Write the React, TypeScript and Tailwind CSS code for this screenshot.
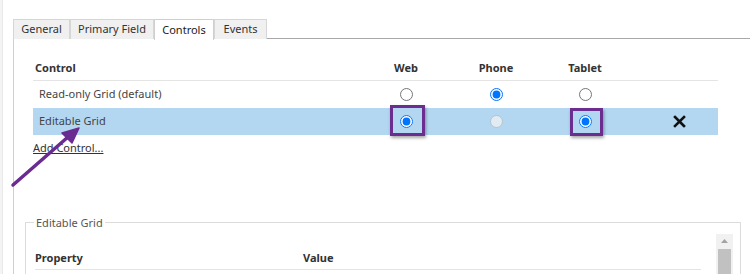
import React from "react";

function Radio({ checked, disabled }: { checked?: boolean; disabled?: boolean }) {
  return (
    <input
      type="radio"
      readOnly
      checked={!!checked}
      disabled={disabled}
      className="m-0 w-[13px] h-[13px]"
    />
  );
}

export default function App() {
  const font = { fontFamily: '"Noto Sans", "Open Sans", sans-serif' };
  return (
    <div
      className="relative w-[750px] h-[274px] overflow-hidden bg-white text-[11px] text-[#333]"
      style={font}
    >
      <div className="flex h-full">
        <div className="w-[3px] h-full bg-[#f4f4f4] border-r border-[#e8e8e8]" />
        <div className="flex-1 flex flex-col pl-[10px]">
          {/* Tabs */}
          <div className="flex pt-[19px] h-[39px] border-b border-[#a8a8a8]">
            {[
              { t: "General", w: "w-[57px]" },
              { t: "Primary Field", w: "w-[84px]" },
              { t: "Controls", w: "w-[60px]", active: true },
              { t: "Events", w: "w-[53px]" },
            ].map((tab) => (
              <div
                key={tab.t}
                className={
                  "h-[20px] flex items-center justify-center border-t border-l border-r " +
                  tab.w +
                  " " +
                  (tab.active
                    ? "bg-white border-[#cfcfcf] h-[21px] -mb-px relative z-10 text-[#222]"
                    : "bg-[#f0f0f0] border-[#d6d6d6] text-[#333]")
                }
              >
                {tab.t}
              </div>
            ))}
          </div>
          {/* Panel */}
          <div className="flex-1 border-l border-[#cfcfcf] flex flex-col">
            <div className="pl-[19px] pt-[17px]">
              <div className="w-[685px]">
                <div className="grid grid-cols-[330px_86px_94px_84px_91px] h-[25px] border-b border-[#e4e4e4] items-center font-bold text-[#333]">
                  <div className="pl-[2px]">Control</div>
                  <div className="text-center">Web</div>
                  <div className="text-center">Phone</div>
                  <div className="text-center">Tablet</div>
                  <div />
                </div>
                <div className="grid grid-cols-[330px_86px_94px_84px_91px] h-[27px] items-center">
                  <div className="pl-[6px] text-[#444]">Read-only Grid (default)</div>
                  <div className="flex justify-center"><Radio /></div>
                  <div className="flex justify-center"><Radio checked /></div>
                  <div className="flex justify-center"><Radio /></div>
                  <div />
                </div>
                <div className="grid grid-cols-[330px_86px_94px_84px_91px] h-[27px] items-center bg-[#b3d7f1]">
                  <div className="pl-[6px] text-[#444]">Editable Grid</div>
                  <div className="flex justify-center"><Radio checked /></div>
                  <div className="flex justify-center"><Radio disabled /></div>
                  <div className="flex justify-center"><Radio checked /></div>
                  <div className="pl-[46px] flex items-center">
                    <svg width="13" height="13" viewBox="0 0 13 13">
                      <path d="M2 2 L11 11 M11 2 L2 11" stroke="#111" strokeWidth="2.6" strokeLinecap="square" />
                    </svg>
                  </div>
                </div>
                <div className="pt-[5px]">
                  <span className="underline text-[#333]">Add Control...</span>
                </div>
              </div>
            </div>
            {/* Fieldset */}
            <div className="pl-[11px] pt-[60px] pr-[9px]">
              <fieldset className="border border-[#dcdcdc] h-[80px] pl-[9px] pr-[6px] m-0">
                <legend className="px-[2px] ml-[-1px] text-[#555] leading-[12px]">Editable Grid</legend>
                <div className="flex">
                  <div className="w-[666px] pt-[19px]">
                    <div className="flex h-[22px] items-center font-bold border-b border-[#e4e4e4]">
                      <div className="w-[268px]">Property</div>
                      <div>Value</div>
                    </div>
                  </div>
                  <div className="ml-[15px] mt-[5px] w-[17px] flex flex-col bg-[#f1f1f1]">
                    <div className="h-[15px] flex items-center justify-center">
                      <svg width="7" height="4" viewBox="0 0 7 4">
                        <path d="M0 4 L3.5 0 L7 4 Z" fill="#a3a3a3" />
                      </svg>
                    </div>
                    <div className="mx-[2px] h-[40px] bg-[#c1c1c1]" />
                  </div>
                </div>
              </fieldset>
            </div>
          </div>
        </div>
      </div>

      {/* Annotation boxes */}
      <div className="absolute left-[390px] top-[105px] w-[35px] h-[31px] border-[3px] border-[#6b2d8f] shadow-[1px_2px_3px_rgba(0,0,0,0.35)]" />
      <div className="absolute left-[570px] top-[108px] w-[33px] h-[28px] border-[3px] border-[#6b2d8f] shadow-[1px_2px_3px_rgba(0,0,0,0.35)]" />

      {/* Annotation arrow */}
      <svg className="absolute left-0 top-0" width="750" height="274" viewBox="0 0 750 274">
        <line x1="13" y1="185" x2="68" y2="137" stroke="#6a2c91" strokeWidth="3.5" strokeLinecap="round" />
        <path d="M79 128 L62 133 L72 143 Z" fill="#6a2c91" stroke="#6a2c91" strokeWidth="1.5" strokeLinejoin="round" />
      </svg>
    </div>
  );
}
